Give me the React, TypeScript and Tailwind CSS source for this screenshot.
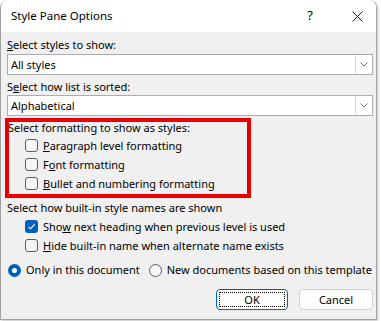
import React from 'react'

const font = { fontFamily: '"Noto Sans", "Segoe UI", sans-serif' }

function Checkbox({ checked, children }: { checked?: boolean; children: React.ReactNode }) {
  return (
    <div className="flex h-[19px] items-center pl-[18px]">
      {checked ? (
        <div className="flex h-[13px] w-[13px] shrink-0 items-center justify-center rounded-[3px] bg-[#005fb8]">
          <svg width="9" height="9" viewBox="0 0 9 9">
            <path d="M1.5 4.8 L3.6 6.8 L7.6 2.2" fill="none" stroke="#fff" strokeWidth="1.1" />
          </svg>
        </div>
      ) : (
        <div className="h-[13px] w-[13px] shrink-0 rounded-[3px] border border-[#5c5c5c] bg-[#f6f6f6]" />
      )}
      <span className="ml-[5px] whitespace-nowrap text-[11px] leading-[16px] text-black">{children}</span>
    </div>
  )
}

function Radio({ checked, children }: { checked?: boolean; children: React.ReactNode }) {
  return (
    <div className="flex items-center">
      {checked ? (
        <div className="flex h-[13px] w-[13px] shrink-0 items-center justify-center rounded-full bg-[#005fb8]">
          <div className="h-[5px] w-[5px] rounded-full bg-white" />
        </div>
      ) : (
        <div className="h-[13px] w-[13px] shrink-0 rounded-full border border-[#5c5c5c] bg-[#f6f6f6]" />
      )}
      <span className="ml-[5px] whitespace-nowrap text-[11px] leading-[16px] text-black">{children}</span>
    </div>
  )
}

function Combo({ value }: { value: string }) {
  return (
    <div className="flex h-[21px] items-stretch border border-[#acacac] bg-white">
      <div className="flex flex-1 items-center pl-[3px] text-[11px] text-black">{value}</div>
      <div className="flex w-[17px] items-center justify-center border-l border-[#dadada] bg-white">
        <svg width="8" height="5" viewBox="0 0 8 5">
          <path d="M0.5 0.5 L4 4 L7.5 0.5" fill="none" stroke="#606060" strokeWidth="0.9" />
        </svg>
      </div>
    </div>
  )
}

export default function App() {
  return (
    <div className="h-[321px] w-[381px] bg-white" style={font}>
      <div className="flex h-[320px] w-[377px] flex-col overflow-hidden rounded-t-[8px] border border-t-0 border-[#a0a0a0] shadow-[1px_1px_3px_rgba(0,0,0,0.25)]">
        <div className="flex h-[32px] shrink-0 items-center bg-white pl-[10px] text-[11.5px] text-black">
          <span>Style Pane Options</span>
          <span className="ml-auto mr-[39px] text-[13px]">?</span>
          <svg className="mr-[13px]" width="11" height="11" viewBox="0 0 11 11">
            <path d="M0.5 0.5 L10.5 10.5 M10.5 0.5 L0.5 10.5" stroke="#1a1a1a" strokeWidth="1" />
          </svg>
        </div>
        <div className="flex flex-1 flex-col bg-[#f0f0f0] pl-[6px] pr-[3px] pt-[5px] text-[11px] leading-[16px] text-black">
          <div>
            <u>S</u>elect styles to show:
          </div>
          <div className="mt-[1px]">
            <Combo value="All styles" />
          </div>
          <div className="mt-[4px]">
            S<u>e</u>lect how list is sorted:
          </div>
          <div>
            <Combo value="Alphabetical" />
          </div>
          <div className="relative mt-[2px] h-[80px]">
            <div className="pt-[2px] pl-[1px]">Select formatting to show as styles:</div>
            <Checkbox>
              <u>P</u>aragraph level formatting
            </Checkbox>
            <Checkbox>
              F<u>o</u>nt formatting
            </Checkbox>
            <Checkbox>
              <u>B</u>ullet and numbering formatting
            </Checkbox>
            <div className="absolute left-[-2px] top-0 h-[80px] w-[246px] border-[4px] border-[#e80000]" />
          </div>
          <div className="mt-[2px]">Select how built-in style names are shown</div>
          <div className="mt-[1px]">
            <Checkbox checked>
              Sho<u>w</u> next heading when previous level is used
            </Checkbox>
            <Checkbox>
              <u>H</u>ide built-in name when alternate name exists
            </Checkbox>
          </div>
          <div className="mt-[7px] flex items-center gap-[9px] pl-[1px]">
            <Radio checked>Only in this document</Radio>
            <Radio>New documents based on this template</Radio>
          </div>
          <div className="mt-[11px] flex justify-end gap-[11px]">
            <button className="h-[21px] w-[72px] rounded-[4px] border-[1.5px] border-[#005fb8] bg-[#fdfdfd] p-[2px]">
              <div className="flex h-full w-full items-center justify-center border border-dotted border-black text-[11px] leading-none">
                OK
              </div>
            </button>
            <button className="h-[21px] w-[74px] rounded-[4px] border border-[#d0d0d0] bg-[#fdfdfd] text-[11px] leading-none">
              Cancel
            </button>
          </div>
        </div>
      </div>
    </div>
  )
}
